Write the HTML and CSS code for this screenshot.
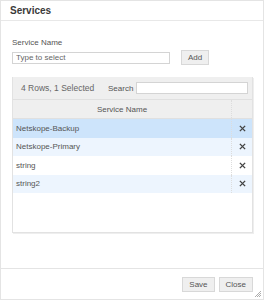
FILE: index.html
```html
<!DOCTYPE html>
<html lang="en">
<head>
    <meta charset="UTF-8">
    <title>Services</title>
    <link rel="stylesheet" href="styles.css">
</head>
<body>

<div class="dialog">
    <div class="dialog-title">Services</div>

    <div class="dialog-body">
        <label class="field-label" for="serviceInput">Service Name</label>
        <div class="field-row">
            <input type="text" id="serviceInput" class="text-input" placeholder="Type to select">
            <button class="btn">Add</button>
        </div>

        <div class="grid">
            <div class="grid-toolbar">
                <span class="row-count">4 Rows, 1 Selected</span>
                <span class="search-label">Search</span>
                <input type="text" class="search-input">
            </div>
            <table class="grid-table">
                <thead>
                    <tr>
                        <th class="col-name">Service Name</th>
                        <th class="col-action"></th>
                    </tr>
                </thead>
                <tbody>
                    <tr class="selected">
                        <td>Netskope-Backup</td>
                        <td class="col-action"><svg class="remove" viewBox="0 0 8 8"><path d="M1 1 L7 7 M7 1 L1 7"/></svg></td>
                    </tr>
                    <tr class="alt">
                        <td>Netskope-Primary</td>
                        <td class="col-action"><svg class="remove" viewBox="0 0 8 8"><path d="M1 1 L7 7 M7 1 L1 7"/></svg></td>
                    </tr>
                    <tr>
                        <td>string</td>
                        <td class="col-action"><svg class="remove" viewBox="0 0 8 8"><path d="M1 1 L7 7 M7 1 L1 7"/></svg></td>
                    </tr>
                    <tr class="alt">
                        <td>string2</td>
                        <td class="col-action"><svg class="remove" viewBox="0 0 8 8"><path d="M1 1 L7 7 M7 1 L1 7"/></svg></td>
                    </tr>
                </tbody>
            </table>
        </div>
    </div>

    <div class="dialog-footer">
        <button class="btn">Save</button>
        <button class="btn">Close</button>
    </div>

    <svg class="grip" width="9" height="9" viewBox="0 0 9 9">
        <path d="M8 2 L2 8 M8 4 L4 8 M8 6 L6 8" stroke="#999" stroke-width="0.8"/>
    </svg>
</div>

</body>
</html>
```

FILE: styles.css
```css
body {
    margin: 0;
    padding: 0;
    background: white;
    font-family: "Liberation Sans", Arial, sans-serif;
    color: #444;
}
.dialog {
    width: 264px;
    height: 300px;
    box-sizing: border-box;
    border: 1px solid #e4e4e4;
    display: flex;
    flex-direction: column;
    position: relative;
}
.dialog-title {
    height: 19px;
    line-height: 20px;
    padding-left: 9px;
    font-size: 10px;
    font-weight: bold;
    color: #3a3a3a;
    border-bottom: 1px solid #e8e8e8;
}
.dialog-body {
    flex: 1;
    padding: 17px 10px 0 11px;
}
.field-label {
    display: block;
    font-size: 8px;
    color: #555;
    line-height: 10px;
}
.field-row {
    display: flex;
    align-items: center;
    margin-top: 2px;
}
.text-input {
    width: 158px;
    height: 12px;
    box-sizing: border-box;
    border: 1px solid #d4d4d4;
    padding: 0 3px;
    font-family: inherit;
    font-size: 8px;
    color: #444;
    outline: none;
}
.text-input::placeholder {
    color: #666;
}
.btn {
    height: 15px;
    box-sizing: border-box;
    border: 1px solid #d8d8d8;
    background: #efefef;
    padding: 0 6px;
    font-family: inherit;
    font-size: 8px;
    color: #555;
    margin-left: 11px;
}
.grid {
    margin-top: 12px;
    height: 156px;
    box-sizing: border-box;
    border: 1px solid #e2e2e2;
    border-top: none;
    box-shadow: 1px 1px 0 #eee;
}
.grid-toolbar {
    height: 23px;
    box-sizing: border-box;
    background: #efefef;
    border-bottom: 1px solid #e0e0e0;
    display: flex;
    align-items: center;
    padding-left: 8px;
    font-size: 8.5px;
    color: #666;
}
.row-count {
    width: 87px;
}
.search-label {
    margin-right: 3px;
    font-size: 8px;
    color: #555;
}
.search-input {
    width: 112px;
    height: 12px;
    box-sizing: border-box;
    border: 1px solid #d4d4d4;
    background: white;
    outline: none;
}
.grid-table {
    width: 100%;
    border-collapse: collapse;
    font-size: 8px;
    color: #555;
}
.grid-table th {
    height: 18px;
    padding: 0;
    font-weight: normal;
    background: #efefef;
    border-bottom: 1px solid #e0e0e0;
}
.grid-table td {
    height: 18.5px;
    padding: 0 0 0 3px;
}
.col-action {
    width: 20px;
    border-left: 1px dotted #ddd;
    text-align: center;
}
.grid-table td.col-action {
    padding: 0;
}
.grid-table tr.selected td {
    background: #cde4fb;
}
.grid-table tr.alt td {
    background: #edf5fe;
}
.remove {
    width: 7px;
    height: 7px;
    display: block;
    margin: 0 auto;
    stroke: #444;
    stroke-width: 1.6;
}
.dialog-footer {
    height: 31px;
    box-sizing: border-box;
    border-top: 1px solid #e4e4e4;
    display: flex;
    justify-content: flex-end;
    align-items: center;
    padding-right: 10px;
}
.dialog-footer .btn {
    margin-left: 4px;
}
.grip {
    position: absolute;
    right: 1px;
    bottom: 1px;
}
```
